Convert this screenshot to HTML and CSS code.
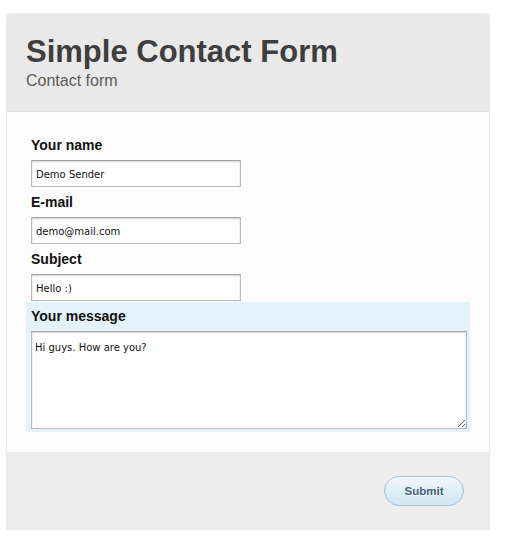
FILE: index.html
```html
<!DOCTYPE html>
<html lang="en">
<head>
<meta charset="utf-8">
<title>Simple Contact Form</title>
<link rel="stylesheet" href="styles.css">
</head>
<body>
  <form class="card">
    <header class="card-head">
      <h1 class="title">Simple Contact Form</h1>
      <p class="subtitle">Contact form</p>
    </header>
    <ul class="fields">
      <li class="field">
        <label class="label" for="name">Your name</label>
        <input class="input" id="name" type="text" value="Demo Sender">
      </li>
      <li class="field">
        <label class="label" for="email">E-mail</label>
        <input class="input" id="email" type="text" value="demo@mail.com">
      </li>
      <li class="field">
        <label class="label" for="subject">Subject</label>
        <input class="input" id="subject" type="text" value="Hello :)">
      </li>
      <li class="field field-active">
        <label class="label" for="message">Your message</label>
        <textarea class="textarea" id="message">Hi guys. How are you?</textarea>
      </li>
    </ul>
    <footer class="card-foot">
      <button class="submit" type="button">Submit</button>
    </footer>
  </form>
</body>
</html>
```
FILE: styles.css
```css
html, body {
  margin: 0;
  padding: 0;
  background: #ffffff;
}

body {
  padding: 14px 0 0 7px;
  font-family: "Liberation Sans", Arial, sans-serif;
}

.card {
  width: 482px;
  border-radius: 4px;
  overflow: hidden;
  background: #fcfcfc;
  box-shadow: 0 0 1px rgba(0, 0, 0, 0.35), 0 1px 3px rgba(0, 0, 0, 0.15);
}

.card-head {
  background: #e9e9e9;
  border-bottom: 1px solid #e0e0e0;
  padding: 20px 18px 0 19px;
  height: 77px;
}

.title {
  margin: 0;
  font-size: 31px;
  line-height: 36px;
  font-weight: bold;
  color: #3e3e3e;
}

.subtitle {
  margin: 2px 0 0;
  font-size: 16px;
  line-height: 18px;
  color: #5c5c5c;
}

.fields {
  list-style: none;
  margin: 0;
  padding: 19px 19px 20px 19px;
}

.field {
  padding: 6px 3px 1px 5px;
}

.field-active {
  background: #e4f3f9;
  padding-bottom: 3px;
}

.label {
  display: block;
  font-size: 14px;
  line-height: 17px;
  font-weight: bold;
  color: #111111;
  margin-bottom: 6px;
}

.input,
.textarea {
  display: block;
  box-sizing: border-box;
  margin: 0;
  border: 1px solid #b9b9b9;
  border-top-color: #a3a3a3;
  border-radius: 0;
  background: #ffffff;
  box-shadow: inset 0 1px 2px rgba(0, 0, 0, 0.18);
  font-family: "DejaVu Sans", Verdana, sans-serif;
  font-size: 10px;
  color: #111111;
  outline: none;
}

.input {
  width: 210px;
  height: 27px;
  padding: 1px 4px 0;
}

.textarea {
  width: 436px;
  height: 98px;
  padding: 9px 3px;
  line-height: 13px;
  resize: both;
}

.card-foot {
  background: #eeeeee;
  height: 78px;
  box-sizing: border-box;
  padding: 24px 25px 0 0;
  display: flex;
  justify-content: flex-end;
  align-items: flex-start;
}

.submit {
  width: 80px;
  height: 30px;
  border: 1px solid #a2c3d1;
  border-radius: 15px;
  background: linear-gradient(#eff8fc, #cfe5ef);
  box-shadow: inset 0 1px 0 rgba(255, 255, 255, 0.7);
  font-family: "Liberation Sans", Arial, sans-serif;
  font-size: 11.5px;
  font-weight: bold;
  color: #3f6179;
  text-shadow: 0 1px 0 #ffffff;
  padding: 0;
  cursor: pointer;
}
```
